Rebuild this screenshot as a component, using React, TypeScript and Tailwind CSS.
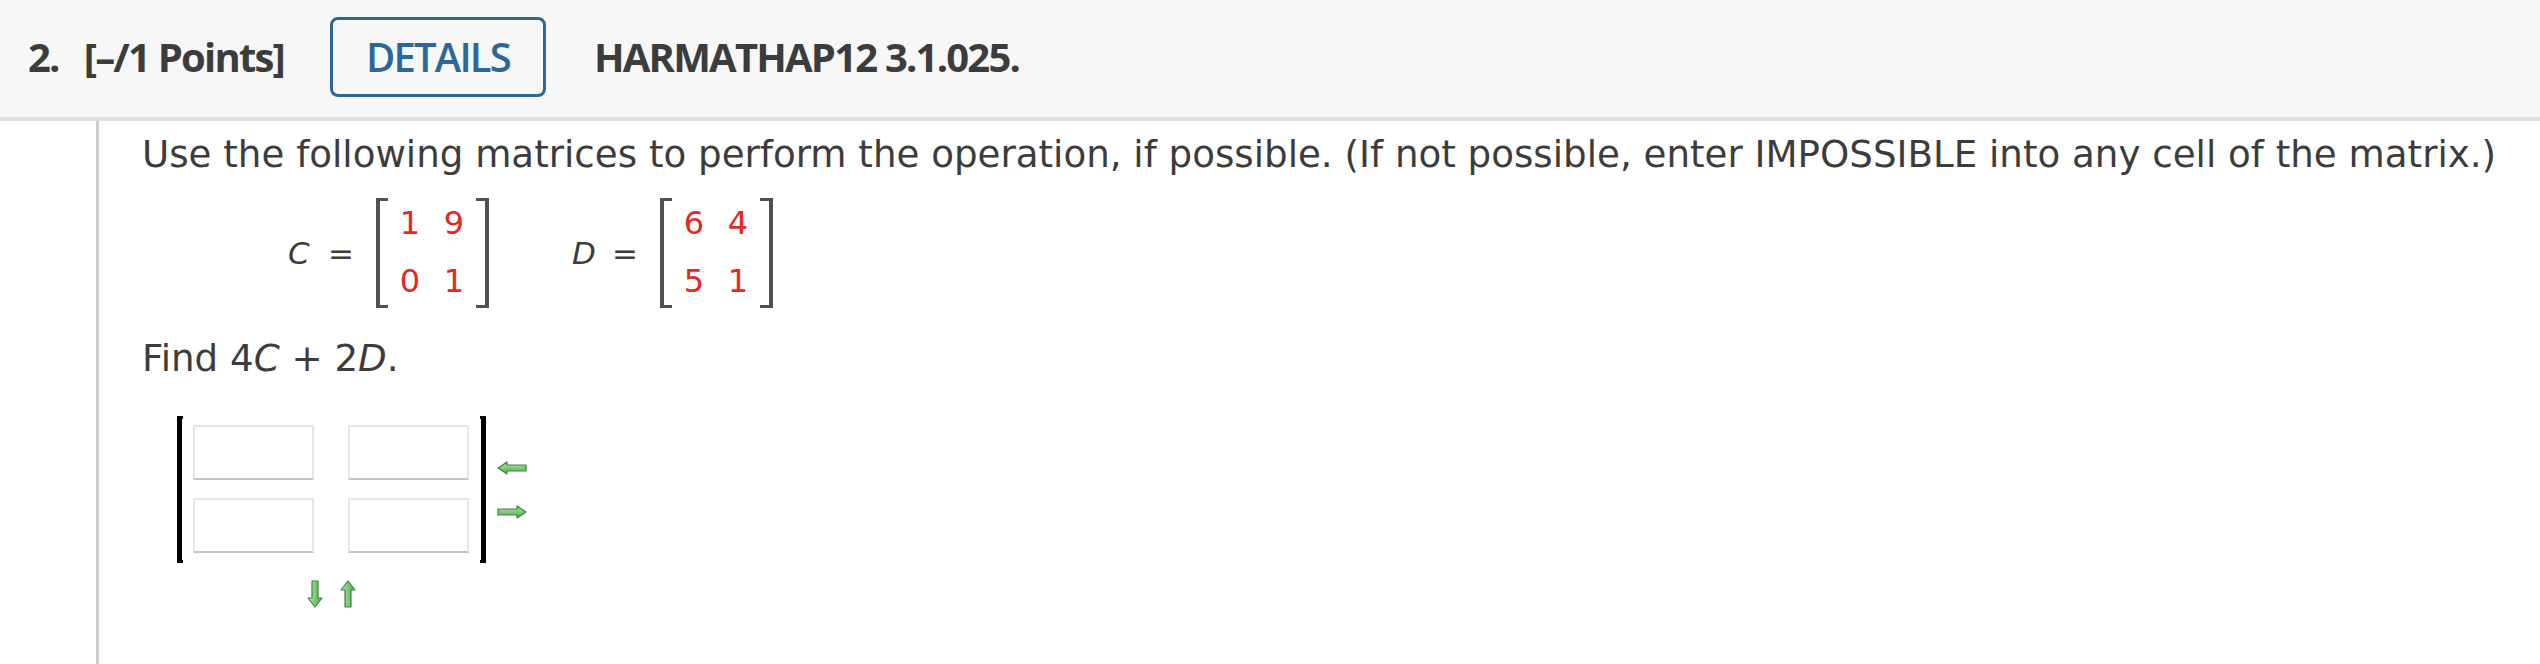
import React from "react";

const body = { fontFamily: '"DejaVu Sans", Verdana, sans-serif' };

function Bracket({ side }: { side: "l" | "r" }) {
  return (
    <div
      className={
        side === "l"
          ? "w-[12px] shrink-0 border-y-[3px] border-l-[4px] border-[#505050]"
          : "w-[13px] shrink-0 border-y-[3px] border-r-[4px] border-[#505050]"
      }
    />
  );
}

function Matrix({ name, rows }: { name: string; rows: number[][] }) {
  return (
    <div className="flex h-[110px] items-center text-[31px] leading-[40px]">
      <span className="w-[40px] italic">{name}</span>
      <span className="w-[48px]">=</span>
      <div className="flex h-[110px]">
        <Bracket side="l" />
        <div className="grid grid-cols-[44px_44px] content-start gap-y-[18px] pt-[5px] text-[32px] text-[#e5281f]">
          {rows.flat().map((v, i) => (
            <span key={i} className="h-[40px] text-center">
              {v}
            </span>
          ))}
        </div>
        <Bracket side="r" />
      </div>
    </div>
  );
}

function Arrow({ dir }: { dir: "left" | "right" | "up" | "down" }) {
  const horiz = dir === "left" || dir === "right";
  const id = `g-${dir}`;
  const pts = {
    left: "1,7 10,1 10,4 29,4 29,10 10,10 10,13",
    right: "29,7 20,1 20,4 1,4 1,10 20,10 20,13",
    down: "5,1 11,1 11,18 15,18 8,27 1,18 5,18",
    up: "5,27 11,27 11,10 15,10 8,1 1,10 5,10",
  }[dir];
  return (
    <svg
      width={horiz ? 30 : 16}
      height={horiz ? 14 : 28}
      viewBox={horiz ? "0 0 30 14" : "0 0 16 28"}
    >
      <defs>
        <linearGradient
          id={id}
          x1="0"
          y1="0"
          x2={horiz ? "0" : "1"}
          y2={horiz ? "1" : "0"}
        >
          <stop offset="0" stopColor="#b9e4b0" />
          <stop offset="1" stopColor="#4fa84a" />
        </linearGradient>
      </defs>
      <polygon points={pts} fill={`url(#${id})`} stroke="#3a873a" strokeWidth="1.2" strokeLinejoin="round" />
    </svg>
  );
}

function Cell() {
  return (
    <div className="h-[55px] w-[121px] border-2 border-[#e6e6e6] border-b-[#c4c4c4] bg-white" />
  );
}

export default function App() {
  return (
    <div className="h-[664px] w-[2540px] overflow-hidden bg-white text-[#3c3c3c]">
      <header
        className="flex h-[121px] items-center border-b-4 border-[#dedede] bg-[#f7f7f7] pb-[4px] pl-[28px] text-[40px] font-bold tracking-[-1.8px]"
        style={{ fontFamily: '"Open Sans", sans-serif' }}
      >
        <span>2.</span>
        <span className="ml-[25px]">[–/1 Points]</span>
        <button className="ml-[46px] flex h-[80px] w-[216px] items-center justify-center rounded-[8px] border-[3px] border-[#2c679c] font-semibold text-[#2c679c]">
          DETAILS
        </button>
        <span className="ml-[48px]">HARMATHAP12 3.1.025.</span>
      </header>

      <div className="flex" style={body}>
        <div className="w-[96px] shrink-0" />
        <div className="min-h-[543px] flex-1 border-l-[3px] border-[#cccccc] pl-[43px] pt-[11px]">
          <p className="whitespace-nowrap text-[37.2px] leading-[44px]">
            Use the following matrices to perform the operation, if possible. (If not possible, enter IMPOSSIBLE into
            any cell of the matrix.)
          </p>

          <div className="ml-[146px] mt-[22px] flex gap-[83px]">
            <Matrix name="C" rows={[[1, 9], [0, 1]]} />
            <Matrix name="D" rows={[[6, 4], [5, 1]]} />
          </div>

          <p className="mt-[28px] text-[37.2px] leading-[44px]">
            Find 4<i>C</i> + 2<i>D</i>.
          </p>

          <div className="ml-[35px] mt-[36px] flex items-start">
            <div className="flex flex-col items-center">
              <div className="flex h-[147px]">
                <div className="w-[6px] border-y-[3px] border-l-[5px] border-black" />
                <div className="ml-[10px] mr-[11px] grid grid-cols-[121px_121px] content-start gap-x-[34px] gap-y-[18px] pt-[9px]">
                  <Cell />
                  <Cell />
                  <Cell />
                  <Cell />
                </div>
                <div className="w-[6px] border-y-[3px] border-r-[5px] border-black" />
              </div>
              <div className="mt-[17px] flex gap-[17px]">
                <Arrow dir="down" />
                <Arrow dir="up" />
              </div>
            </div>
            <div className="ml-[11px] flex h-[147px] flex-col justify-center gap-[30px]">
              <Arrow dir="left" />
              <Arrow dir="right" />
            </div>
          </div>
        </div>
      </div>
    </div>
  );
}
